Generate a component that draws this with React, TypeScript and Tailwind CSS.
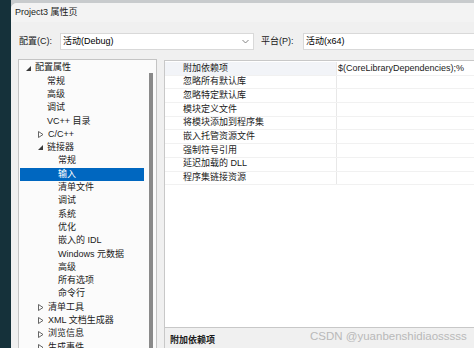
import React from "react";

const FONT = { fontFamily: '"Liberation Sans","Noto Sans CJK SC",sans-serif' };

function Expanded() {
  return (
    <svg width="5" height="5" viewBox="0 0 5 5" className="shrink-0">
      <path d="M5 0 L5 5 L0 5 Z" fill="#3a3a3a" />
    </svg>
  );
}
function Collapsed() {
  return (
    <svg width="6" height="7" viewBox="0 0 6 7" className="shrink-0">
      <path d="M0.5 0.5 L5 3.5 L0.5 6.5 Z" fill="none" stroke="#555" strokeWidth="0.9" />
    </svg>
  );
}

type Item = { t: string; lvl: 0 | 1 | 2; icon?: "e" | "c"; sel?: boolean };
const tree: Item[] = [
  { t: "配置属性", lvl: 0, icon: "e" },
  { t: "常规", lvl: 1 },
  { t: "高级", lvl: 1 },
  { t: "调试", lvl: 1 },
  { t: "VC++ 目录", lvl: 1 },
  { t: "C/C++", lvl: 1, icon: "c" },
  { t: "链接器", lvl: 1, icon: "e" },
  { t: "常规", lvl: 2 },
  { t: "输入", lvl: 2, sel: true },
  { t: "清单文件", lvl: 2 },
  { t: "调试", lvl: 2 },
  { t: "系统", lvl: 2 },
  { t: "优化", lvl: 2 },
  { t: "嵌入的 IDL", lvl: 2 },
  { t: "Windows 元数据", lvl: 2 },
  { t: "高级", lvl: 2 },
  { t: "所有选项", lvl: 2 },
  { t: "命令行", lvl: 2 },
  { t: "清单工具", lvl: 1, icon: "c" },
  { t: "XML 文档生成器", lvl: 1, icon: "c" },
  { t: "浏览信息", lvl: 1, icon: "c" },
  { t: "生成事件", lvl: 1, icon: "c" },
];

const props = [
  "附加依赖项",
  "忽略所有默认库",
  "忽略特定默认库",
  "模块定义文件",
  "将模块添加到程序集",
  "嵌入托管资源文件",
  "强制符号引用",
  "延迟加载的 DLL",
  "程序集链接资源",
];

function TreeRow({ it }: { it: Item }) {
  const padIcon = it.lvl === 0 ? "pl-[6px]" : "pl-[18px]";
  const padText = it.lvl === 0 ? "pl-[16px]" : it.lvl === 1 ? "pl-[27px]" : "pl-[38px]";
  return (
    <div
      className={
        "h-[13.3px] flex items-center ml-[1px] w-[124px] relative " +
        (it.sel ? "bg-[#0067c0] text-white" : "text-[#1a1a1a]")
      }
    >
      {it.icon ? (
        <div className={"flex items-center " + padIcon}>
          {it.icon === "e" ? <Expanded /> : <Collapsed />}
          <span className="pl-[4px] whitespace-nowrap">{it.t}</span>
        </div>
      ) : (
        <span className={"whitespace-nowrap " + padText}>{it.t}</span>
      )}
    </div>
  );
}

function Chevron() {
  return (
    <svg width="7" height="5" viewBox="0 0 7 5">
      <path d="M0.5 1 L3.5 4 L6.5 1" fill="none" stroke="#777" strokeWidth="0.9" />
    </svg>
  );
}

export default function App() {
  return (
    <div className="w-[474px] h-[348px] flex overflow-hidden text-[9px] relative" style={FONT}>
      <div className="w-[11px] h-full bg-[#15313a] shrink-0" />
      <div className="flex-1 flex flex-col bg-[#c8cbcd]">
        <div className="h-[3px] shrink-0" />
        <div className="flex-1 flex flex-col bg-[#f0f0f0] rounded-tl-[6px] overflow-hidden">
          {/* title */}
          <div className="h-[19px] shrink-0 flex items-center pl-[4px] bg-[#f3f3f3] text-[#1a1a1a]">
            Project3 属性页
          </div>
          {/* config row */}
          <div className="mt-[11px] h-[17px] shrink-0 flex items-center">
            <span className="pl-[8px] w-[49px] text-[#1a1a1a] whitespace-nowrap">配置(C):</span>
            <div className="w-[194px] h-[17px] bg-white border border-[#d9d9d9] flex items-center justify-between pl-[2px] pr-[4px]">
              <span>活动(Debug)</span>
              <Chevron />
            </div>
            <span className="pl-[7px] w-[49px] whitespace-nowrap text-[#1a1a1a]">平台(P):</span>
            <div className="flex-1 h-[17px] bg-white border border-[#d9d9d9] border-r-0 flex items-center pl-[2px]">
              <span>活动(x64)</span>
            </div>
          </div>
          {/* main */}
          <div className="mt-[9px] flex-1 flex pl-[7px] min-h-0">
            {/* tree */}
            <div className="w-[139px] border border-[#c4c4c4] border-b-0 bg-[#fbfbfb] flex">
              <div className="flex-1 pt-[1.5px] overflow-hidden">
                {tree.map((it, i) => (
                  <TreeRow key={i} it={it} />
                ))}
              </div>
              <div className="w-[9px] shrink-0 pt-[13px] pl-[2px]">
                <div className="w-[4px] h-full bg-[#8a8a8a]" />
              </div>
            </div>
            {/* right panel */}
            <div className="ml-[7px] flex-1 flex flex-col border-l border-t border-[#c8c8c8] mt-[1px] bg-white">
              <div className="flex-1 flex flex-col pt-[1px]">
                {props.map((p, i) => (
                  <div
                    key={i}
                    className={
                      "h-[13.7px] flex border-b border-[#f1f1f1] " +
                      (i === 0 ? "bg-[#f2f4f8]" : "")
                    }
                  >
                    <div className="w-[171px] shrink-0 pl-[18px] flex items-center whitespace-nowrap text-[#1a1a1a]">
                      {p}
                    </div>
                    <div className="flex-1 border-l border-[#e8e8e8] pl-[1px] flex items-center whitespace-nowrap overflow-hidden bg-white text-[#1a1a1a]">
                      {i === 0 ? "$(CoreLibraryDependencies);%" : ""}
                    </div>
                  </div>
                ))}
                <div className="flex-1 flex">
                  <div className="w-[171px] shrink-0" />
                  <div className="flex-1" />
                </div>
              </div>
              <div className="h-[21px] shrink-0 border-t border-[#c8c8c8] bg-[#f0f0f0] flex items-start pt-[6px] pl-[5px]">
                <span className="font-bold text-[#1a1a1a]">附加依赖项</span>
              </div>
            </div>
          </div>
        </div>
      </div>
      <div className="absolute left-[310px] top-[328px] text-[11.5px] text-[#b9b9b9] whitespace-nowrap">
        CSDN @yuanbenshidiaosssss
      </div>
    </div>
  );
}
